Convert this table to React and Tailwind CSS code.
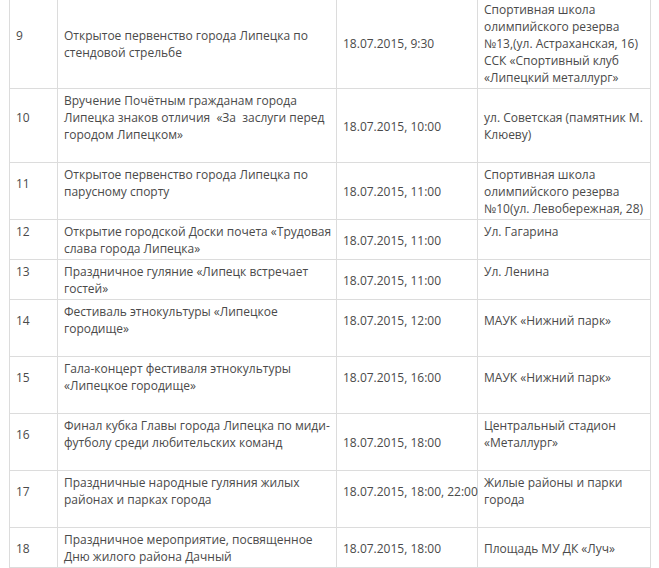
const rows = [
  {
    num: ['9', ''],
    title: ['Открытое первенство города Липецка по', 'стендовой стрельбе'],
    date: ['18.07.2015, 9:30'],
    place: [
      'Спортивная школа',
      'олимпийского резерва',
      '№13,(ул. Астраханская, 16)',
      'ССК «Спортивный клуб',
      '«Липецкий металлург»',
    ],
  },
  {
    num: ['10', ''],
    title: [
      'Вручение Почётным гражданам города',
      'Липецка знаков отличия  «За  заслуги перед',
      'городом Липецком»',
      '',
    ],
    date: ['18.07.2015, 10:00'],
    place: ['ул. Советская (памятник М.', 'Клюеву)'],
  },
  {
    num: ['11', ''],
    title: ['Открытое первенство города Липецка по', 'парусному спорту', ''],
    date: ['18.07.2015, 11:00'],
    place: ['Спортивная школа', 'олимпийского резерва', '№10(ул. Левобережная, 28)'],
  },
  {
    num: ['12', ''],
    title: ['Открытие городской Доски почета «Трудовая', 'слава города Липецка»'],
    date: ['18.07.2015, 11:00'],
    place: ['Ул. Гагарина', ''],
  },
  {
    num: ['13', ''],
    title: ['Праздничное гуляние «Липецк встречает', 'гостей»'],
    date: ['18.07.2015, 11:00'],
    place: ['Ул. Ленина', ''],
  },
  {
    num: ['14', ''],
    title: ['Фестиваль этнокультуры «Липецкое', 'городище»', ''],
    date: ['18.07.2015, 12:00', ''],
    place: ['МАУК «Нижний парк»', ''],
  },
  {
    num: ['15', ''],
    title: ['Гала-концерт фестиваля этнокультуры', '«Липецкое городище»', ''],
    date: ['18.07.2015, 16:00', ''],
    place: ['МАУК «Нижний парк»', ''],
  },
  {
    num: ['16', ''],
    title: ['Финал кубка Главы города Липецка по миди-', 'футболу среди любительских команд', ''],
    date: ['18.07.2015, 18:00'],
    place: ['Центральный стадион', '«Металлург»', ''],
  },
  {
    num: ['17', ''],
    title: ['Праздничные народные гуляния жилых', 'районах и парках города', ''],
    date: ['18.07.2015, 18:00, 22:00', ''],
    place: ['Жилые районы и парки', 'города', ''],
  },
  {
    num: ['18'],
    title: ['Праздничное мероприятие, посвященное', 'Дню жилого района Дачный'],
    date: ['18.07.2015, 18:00'],
    place: ['Площадь МУ ДК «Луч»'],
  },
];

function Cell({ lines }) {
  return (
    <td className="border border-[#dcdcdc] align-middle pl-[6px] pr-1 pt-[3px] pb-[2px]">
      {lines.map((line, i) => (
        <div key={i} className="whitespace-pre">
          {line === '' ? '\u00a0' : line}
        </div>
      ))}
    </td>
  );
}

export default function App() {
  return (
    <div className="w-[659px] h-[568px] overflow-hidden bg-white">
      <table
        className="ml-[9px] mt-[-3px] w-[641px] table-fixed border-collapse text-[12px] leading-[17px] text-[#4a4a4a]"
        style={{ fontFamily: '"Open Sans", "Noto Sans", sans-serif' }}
      >
        <colgroup>
          <col className="w-[48px]" />
          <col className="w-[279px]" />
          <col className="w-[141px]" />
          <col className="w-[173px]" />
        </colgroup>
        <tbody>
          {rows.map((row) => (
            <tr key={row.num[0]}>
              <Cell lines={row.num} />
              <Cell lines={row.title} />
              <Cell lines={row.date} />
              <Cell lines={row.place} />
            </tr>
          ))}
        </tbody>
      </table>
    </div>
  );
}
